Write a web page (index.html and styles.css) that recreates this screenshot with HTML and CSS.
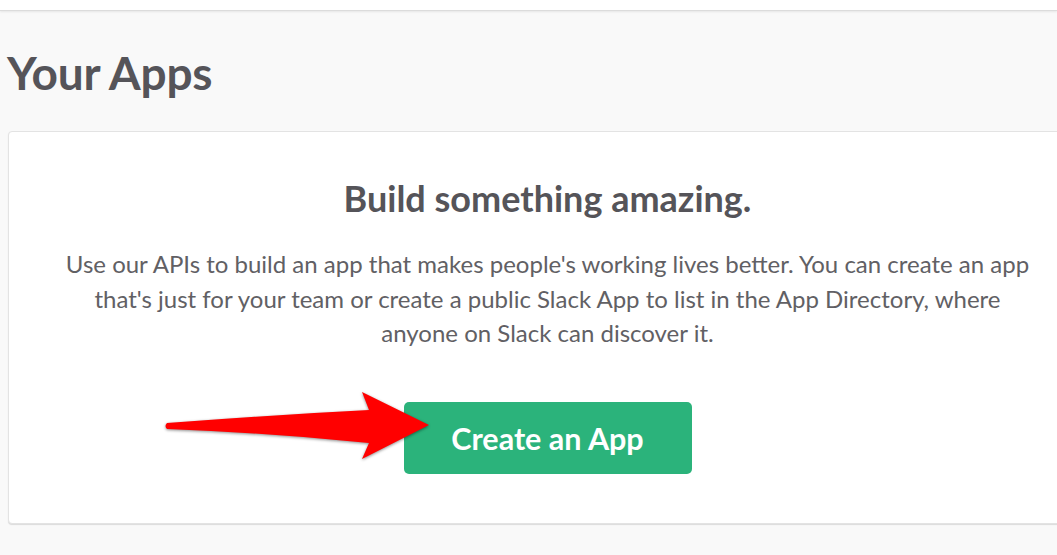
FILE: index.html
```html
<!DOCTYPE html>
<html lang="en">
<head>
<meta charset="utf-8">
<title>Your Apps</title>
<link rel="stylesheet" href="styles.css">
</head>
<body>
<header class="topbar"></header>
<main class="page">
  <h1 class="page-title">Your Apps</h1>
  <section class="card">
    <h2 class="card-title">Build something amazing.</h2>
    <p class="card-text">Use our APIs to build an app that makes people's working lives better. You can create an app that's just for your team or create a public Slack App to list in the App Directory, where anyone on Slack can discover it.</p>
    <div class="actions">
      <a class="btn-create" href="#">Create an App</a>
    </div>
  </section>
</main>
<svg class="annotation" width="1057" height="555" viewBox="0 0 1057 555" aria-hidden="true">
  <path class="arrow" d="M167,423 Q270,415 369,410 L362,392 L429,425 L362,459 L369,443 Q270,433 167,429 Q164,426 167,423 Z"/>
</svg>
</body>
</html>
```
FILE: styles.css
```css
html, body {
  margin: 0;
  padding: 0;
}
body {
  background: #f9f9f9;
  font-family: Lato, "Noto Sans", "Liberation Sans", sans-serif;
  color: #555459;
  width: 1057px;
  height: 555px;
  overflow: hidden;
  position: relative;
}
.topbar {
  height: 10px;
  background: #ffffff;
  border-bottom: 1px solid #dcdcdc;
  box-shadow: 0 1px 2px rgba(0, 0, 0, 0.08);
}
.page {
  padding: 0 0 0 8px;
  margin-right: -30px;
}
.page-title {
  margin: 34px 0 31px -1px;
  font-size: 46px;
  line-height: 1.2;
  font-weight: 700;
  letter-spacing: -0.2px;
  color: #555459;
}
.card {
  background: #ffffff;
  border: 1px solid #e3e3e3;
  border-radius: 4px;
  box-shadow: 0 1px 1px rgba(0, 0, 0, 0.12);
  padding: 45px 40px 49px;
  text-align: center;
}
.card-title {
  margin: 0;
  font-size: 36px;
  line-height: 1.2;
  font-weight: 700;
  color: #555459;
}
.card-text {
  margin: 27px auto 0;
  max-width: 975px;
  font-size: 24px;
  line-height: 34.5px;
  color: #616064;
}
.actions {
  display: flex;
  justify-content: center;
  margin-top: 51px;
}
.btn-create {
  display: flex;
  align-items: center;
  justify-content: center;
  width: 288px;
  height: 72px;
  background: #2bb37b;
  border-radius: 5px;
  color: #ffffff;
  font-size: 30.5px;
  font-weight: 700;
  text-decoration: none;
}
.annotation {
  position: absolute;
  left: 0;
  top: 0;
  pointer-events: none;
}
.arrow {
  fill: #ff0000;
  filter: drop-shadow(0 1px 1.5px rgba(0, 0, 0, 0.45));
}
```
